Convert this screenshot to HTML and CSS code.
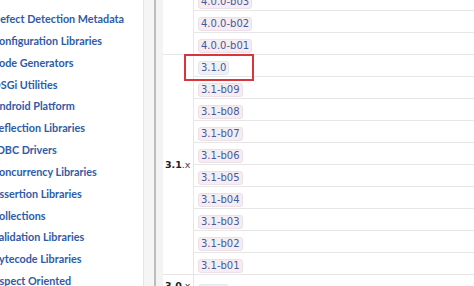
FILE: index.html
```html
<!DOCTYPE html>
<html>
<head>
<meta charset="utf-8">
<link rel="stylesheet" href="styles.css">
</head>
<body>
<div class="page">
  <nav class="sidebar">
    <a href="#">Defect Detection Metadata</a>
    <a href="#">Configuration Libraries</a>
    <a href="#">Code Generators</a>
    <a href="#">OSGi Utilities</a>
    <a href="#">Android Platform</a>
    <a href="#">Reflection Libraries</a>
    <a href="#">JDBC Drivers</a>
    <a href="#">Concurrency Libraries</a>
    <a href="#">Assertion Libraries</a>
    <a href="#">Collections</a>
    <a href="#">Validation Libraries</a>
    <a href="#">Bytecode Libraries</a>
    <a href="#">Aspect Oriented</a>
  </nav>
  <div class="divider"><span class="d1"></span><span class="d2"></span><span class="d3"></span><span class="d4"></span></div>
  <main class="main">
    <table class="versions">
      <tr><td class="grp" rowspan="3"></td><td class="ver"><a class="vbtn" href="#">4.0.0-b03</a></td></tr>
      <tr><td class="ver"><a class="vbtn" href="#">4.0.0-b02</a></td></tr>
      <tr><td class="ver"><a class="vbtn" href="#">4.0.0-b01</a></td></tr>
      <tr><td class="grp" rowspan="10"><b>3.1</b>.x</td><td class="ver"><a class="vbtn visited" href="#">3.1.0</a></td></tr>
      <tr><td class="ver"><a class="vbtn" href="#">3.1-b09</a></td></tr>
      <tr><td class="ver"><a class="vbtn" href="#">3.1-b08</a></td></tr>
      <tr><td class="ver"><a class="vbtn" href="#">3.1-b07</a></td></tr>
      <tr><td class="ver"><a class="vbtn" href="#">3.1-b06</a></td></tr>
      <tr><td class="ver"><a class="vbtn" href="#">3.1-b05</a></td></tr>
      <tr><td class="ver"><a class="vbtn" href="#">3.1-b04</a></td></tr>
      <tr><td class="ver"><a class="vbtn" href="#">3.1-b03</a></td></tr>
      <tr><td class="ver"><a class="vbtn" href="#">3.1-b02</a></td></tr>
      <tr><td class="ver"><a class="vbtn" href="#">3.1-b01</a></td></tr>
      <tr><td class="grp grp-top"><b>3.0</b>.x</td><td class="ver"><a class="vbtn visited" href="#">3.0.1</a></td></tr>
    </table>
    <div class="highlight"></div>
  </main>
</div>
</body>
</html>
```

FILE: styles.css
```css
html, body {
  margin: 0;
  padding: 0;
  background: #ffffff;
  overflow: hidden;
}
.page {
  display: flex;
  width: 474px;
  height: 286px;
  overflow: hidden;
}
.sidebar {
  width: 143px;
  flex: 0 0 143px;
  display: flex;
  flex-direction: column;
  padding-top: 8px;
  overflow: hidden;
}
.sidebar a {
  display: block;
  margin-left: -8px;
  white-space: nowrap;
  line-height: 21.85px;
  font-family: "Lato", "Open Sans", sans-serif;
  font-weight: 700;
  font-size: 10.8px;
  color: #2f5ba6;
  text-decoration: none;
}
.divider {
  display: flex;
  flex: 0 0 20px;
}
.divider span { display: block; }
.d1 { width: 1px; background: #e6e6e6; }
.d2 { width: 10px; background: #f5f5f5; }
.d3 { width: 2px; background: #bcbcbc; }
.d4 { width: 7px; background: #f3f3f3; }
.main {
  position: relative;
  flex: 1;
}
.versions {
  border-collapse: collapse;
  width: 100%;
  margin-top: -12px;
  font-family: "DejaVu Sans", Verdana, sans-serif;
}
.versions td {
  border-top: 1px solid #e6e6e6;
  height: 21px;
  padding: 0;
}
.grp {
  width: 28px;
  border-right: 1px solid #e6e6e6;
  font-size: 9.5px;
  color: #444;
  padding-left: 2px !important;
  vertical-align: middle;
}
.grp b { color: #222; }
.grp-top { vertical-align: top !important; padding-top: 5px !important; }
.ver {
  padding-left: 4px !important;
  vertical-align: middle;
}
.vbtn {
  display: inline-block;
  font-size: 10px;
  line-height: 12px;
  padding: 0 2px;
  color: #45599a;
  background: #f6edf2;
  border: 1px solid #ecdfe6;
  border-radius: 3px;
  text-decoration: none;
}
.vbtn.visited {
  background: #eef1f6;
  border-color: #e2e6ee;
}
.highlight {
  position: absolute;
  left: 21px;
  top: 54px;
  width: 66px;
  height: 23px;
  border: 2px solid #d8353c;
}
```
